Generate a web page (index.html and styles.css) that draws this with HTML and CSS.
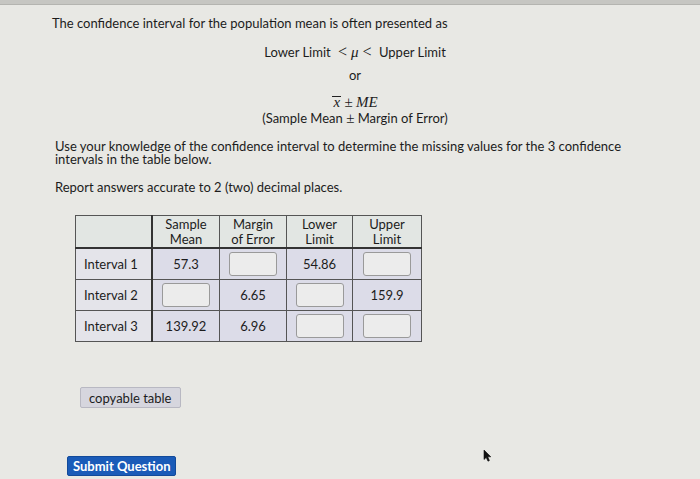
FILE: index.html
```html
<!DOCTYPE html>
<html>
<head>
<meta charset="utf-8">
<link rel="stylesheet" href="styles.css">
</head>
<body>
<div class="topbar"></div>
<main class="content">
  <p class="intro">The confidence interval for the population mean is often presented as</p>
  <div class="formula">
    <div class="f-line f1">Lower Limit <span class="m op">&lt;</span><span class="m mi">μ</span><span class="m op">&lt;</span> Upper Limit</div>
    <div class="f-line f2">or</div>
    <div class="f-line f3"><span class="m mi xbar">x</span> <span class="m">±</span> <span class="m mi">ME</span></div>
    <div class="f-line f4">(Sample Mean <span class="m">±</span> Margin of Error)</div>
  </div>
  <p class="task">Use your knowledge of the confidence interval to determine the missing values for the 3 confidence intervals in the table below.</p>
  <p class="report">Report answers accurate to 2 (two) decimal places.</p>
  <table class="ci">
    <thead>
      <tr>
        <th class="corner"></th>
        <th>Sample<br>Mean</th>
        <th>Margin<br>of Error</th>
        <th>Lower<br>Limit</th>
        <th>Upper<br>Limit</th>
      </tr>
    </thead>
    <tbody>
      <tr>
        <th class="rowh">Interval 1</th>
        <td>57.3</td>
        <td><span class="box"></span></td>
        <td>54.86</td>
        <td><span class="box"></span></td>
      </tr>
      <tr>
        <th class="rowh">Interval 2</th>
        <td><span class="box"></span></td>
        <td>6.65</td>
        <td><span class="box"></span></td>
        <td>159.9</td>
      </tr>
      <tr>
        <th class="rowh">Interval 3</th>
        <td>139.92</td>
        <td>6.96</td>
        <td><span class="box"></span></td>
        <td><span class="box"></span></td>
      </tr>
    </tbody>
  </table>
  <div class="copy-wrap"><button class="copy">copyable table</button></div>
  <div class="submit-row">
    <button class="submit">Submit Question</button>
    <svg class="cursor" width="9" height="13" viewBox="0 0 9 13"><path d="M1 1 L1 10.5 L3.2 8.4 L5 12.2 L6.4 11.5 L4.7 7.8 L7.8 7.8 Z" fill="#111" stroke="#111" stroke-width="0.6" stroke-linejoin="round"/></svg>
  </div>
</main>
</body>
</html>
```
FILE: styles.css
```css
html, body {
  margin: 0;
  padding: 0;
}
body {
  background: #e8e8e4;
  font-family: Lato, "Open Sans", sans-serif;
  font-size: 13px;
  color: #1c1c1c;
  width: 700px;
  height: 479px;
  overflow: hidden;
}
.topbar {
  height: 4px;
  background: #c6c6c2;
  border-bottom: 1px solid #b4b4b0;
}
.content {
  width: 606px;
  padding: 9px 0 0 52px;
}
.intro {
  margin: 0;
  line-height: 18px;
}
.formula {
  text-align: center;
  line-height: 18px;
}
.f-line { height: 18px; }
.f1 { margin-top: 11px; }
.f2 { margin-top: 5px; }
.f3 { margin-top: 9px; }
.f4 { margin-top: -2px; }
.m {
  font-family: "Liberation Serif", "DejaVu Serif", serif;
  font-size: 15px;
}
.op {
  font-size: 16px;
  margin: 0 4px;
}
.mi { font-style: italic; }
.xbar {
  display: inline-block;
  line-height: 11px;
  border-top: 1px solid #222;
  padding: 0 1px;
}
.task {
  margin: 13px 0 0 3px;
  line-height: 13px;
  width: 600px;
}
.report {
  margin: 12px 0 0 3px;
  line-height: 18px;
}
.ci {
  margin: 19px 0 0 23px;
  border-collapse: collapse;
  border: 1px solid #555;
  font-size: 13px;
}
.ci th, .ci td {
  border: 1px solid #555;
  font-weight: normal;
  text-align: center;
  padding: 0;
}
.ci thead th {
  background: #e2e6e3;
  height: 31px;
  line-height: 15px;
  vertical-align: middle;
}
.ci thead tr { border-bottom: 2px solid #333; }
.ci th.corner { width: 75px; }
.ci thead th:nth-child(2) { width: 66px; }
.ci thead th:nth-child(3) { width: 66px; }
.ci thead th:nth-child(4) { width: 65px; }
.ci thead th:nth-child(5) { width: 68px; }
.ci .corner, .ci .rowh { border-right: 2px solid #333; }
.ci .rowh {
  background: #e4e4ea;
  text-align: left;
  padding-left: 8px;
  height: 30px;
}
.ci tbody td {
  background: #dcdce8;
  height: 30px;
}
.box {
  display: inline-block;
  width: 46px;
  height: 22px;
  background: #ececec;
  border: 1px solid #9a9a9a;
  border-radius: 3px;
  vertical-align: middle;
}
.copy-wrap {
  margin: 45px 0 0 28px;
}
.copy {
  font-family: inherit;
  font-size: 13px;
  color: #1c1c1c;
  background: #d6d6de;
  border: 1px solid #b8b8c2;
  border-radius: 2px;
  padding: 0 8px;
  height: 21px;
}
.submit-row {
  margin-top: 48px;
  margin-left: 15px;
  display: flex;
  align-items: flex-start;
}
.submit {
  font-family: inherit;
  font-size: 13px;
  font-weight: bold;
  color: #fff;
  background: #1a5bb8;
  border: 1px solid #124a9a;
  border-radius: 2px;
  height: 20px;
  padding: 0 5px;
}
.cursor {
  margin-left: 307px;
  margin-top: -7px;
}
```
